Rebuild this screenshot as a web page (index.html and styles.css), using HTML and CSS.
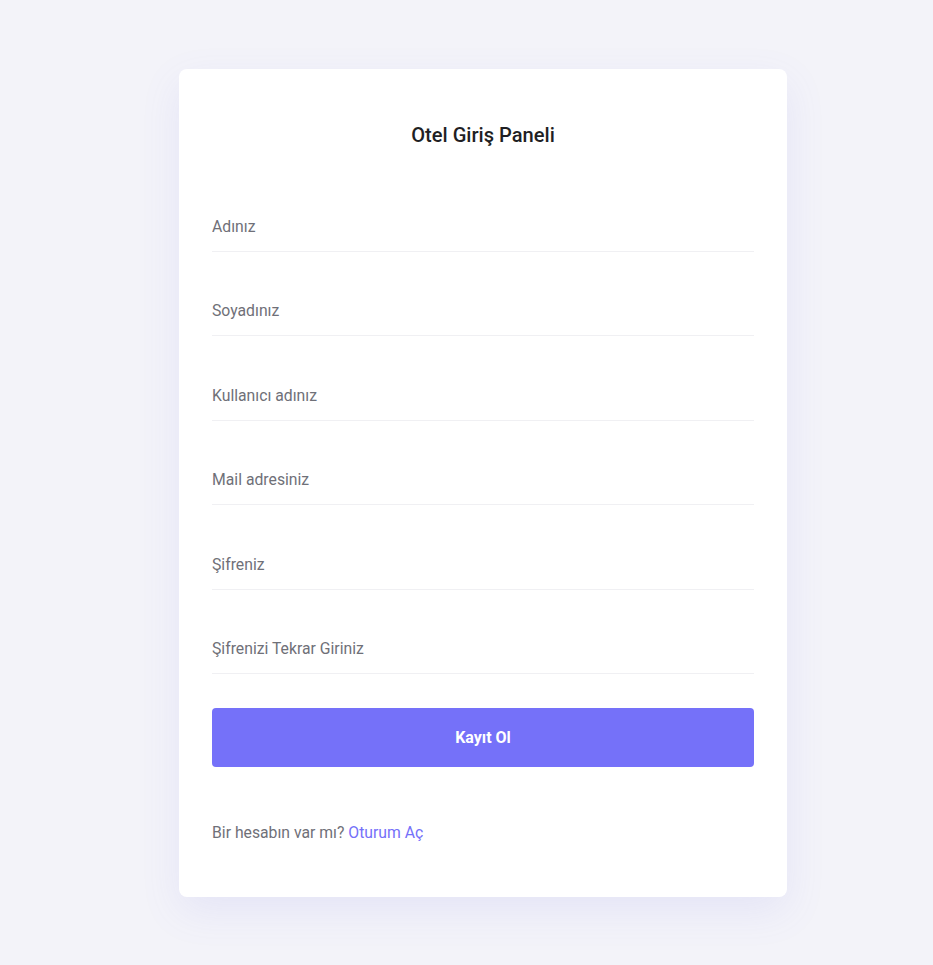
FILE: index.html
```html
<!DOCTYPE html>
<html lang="tr">
<head>
<meta charset="utf-8">
<title>Otel Giriş Paneli</title>
<link rel="stylesheet" href="styles.css">
</head>
<body>
<div class="page">
  <div class="card">
    <h1 class="title">Otel Giriş Paneli</h1>
    <form class="form">
      <input class="field" type="text" placeholder="Adınız">
      <input class="field" type="text" placeholder="Soyadınız">
      <input class="field" type="text" placeholder="Kullanıcı adınız">
      <input class="field" type="email" placeholder="Mail adresiniz">
      <input class="field" type="password" placeholder="Şifreniz">
      <input class="field" type="password" placeholder="Şifrenizi Tekrar Giriniz">
      <button class="btn" type="button">Kayıt Ol</button>
    </form>
    <p class="footer">Bir hesabın var mı? <a class="link" href="#">Oturum Aç</a></p>
  </div>
</div>
</body>
</html>
```
FILE: styles.css
```css
html, body {
  margin: 0;
  padding: 0;
  background: #f3f3f9;
  font-family: Roboto, "Liberation Sans", sans-serif;
}
.page {
  padding: 69px 0 68px 179px;
}
.card {
  width: 608px;
  box-sizing: border-box;
  background: #fff;
  border-radius: 8px;
  padding: 54px 33px 52px;
  box-shadow: 0 14px 40px rgba(110, 105, 230, 0.1);
}
.title {
  margin: 0 0 54px;
  font-size: 20.1px;
  line-height: 24px;
  font-weight: 500;
  color: #1f1f24;
  text-align: center;
}
.form {
  display: flex;
  flex-direction: column;
  gap: 33.4px;
}
.field {
  display: block;
  width: 100%;
  height: 51px;
  box-sizing: border-box;
  border: none;
  border-bottom: 1px solid #f0f0f3;
  padding: 1px 0 0;
  margin: 0;
  font-family: inherit;
  font-size: 15.75px;
  color: #333;
  outline: none;
  background: transparent;
}
.field::placeholder {
  color: #6f7078;
  opacity: 1;
}
.btn {
  margin-top: 1px;
  height: 59px;
  width: 100%;
  border: none;
  border-radius: 4px;
  background: #7571f9;
  color: #fff;
  font-family: inherit;
  font-size: 16px;
  font-weight: 700;
  cursor: pointer;
}
.footer {
  margin: 54px 0 0;
  font-size: 15.75px;
  line-height: 24px;
  color: #6f7078;
}
.link {
  color: #7571f9;
  text-decoration: none;
}
```
